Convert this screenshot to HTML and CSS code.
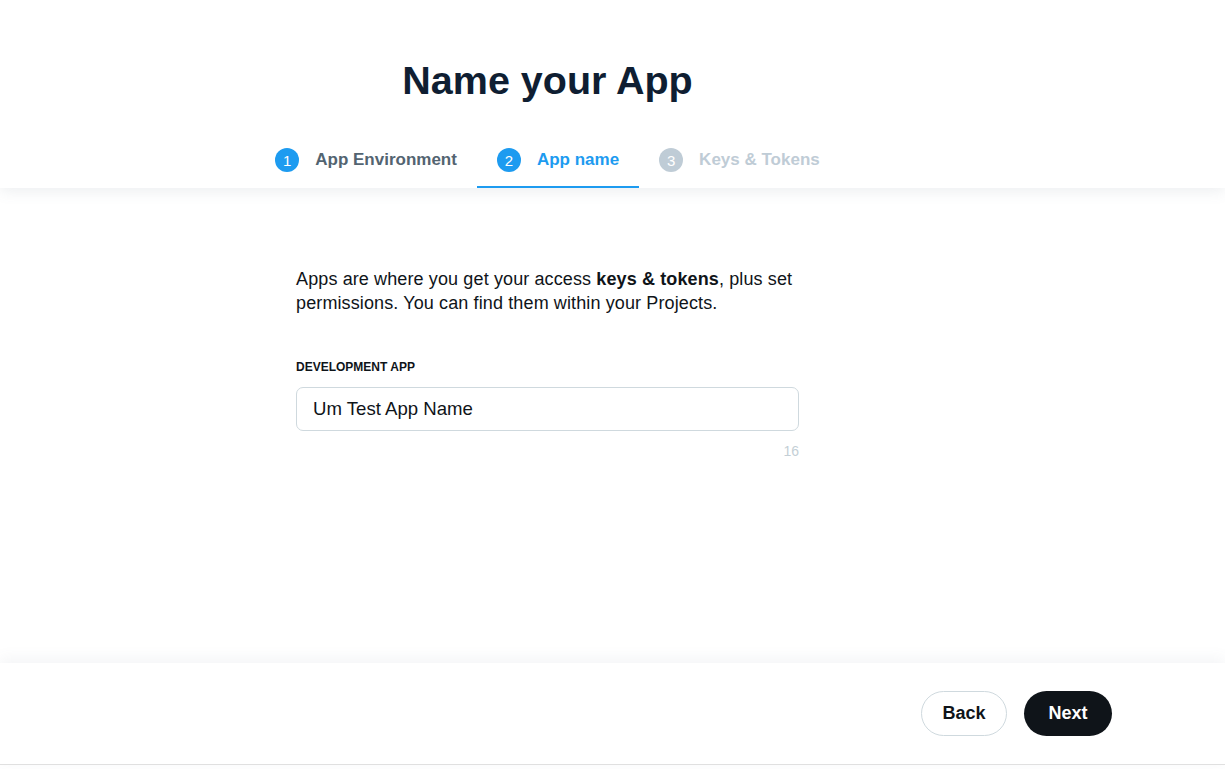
FILE: index.html
```html
<!DOCTYPE html>
<html>
<head>
    <link rel="stylesheet" href="styles.css">
</head>
<body>
    <div id="page">
        <div id="header">
            <div class="column">
                <h1 class="title">Name your App</h1>
                <div class="steps">
                    <div class="step done"><span class="num">1</span>App Environment</div>
                    <div class="step active"><span class="num">2</span>App name</div>
                    <div class="step todo"><span class="num">3</span>Keys &amp; Tokens</div>
                </div>
            </div>
        </div>

        <div id="main">
            <div class="column">
                <div class="form">
                    <p class="intro">Apps are where you get your access <b>keys &amp; tokens</b>, plus set permissions. You can find them within your Projects.</p>
                    <label class="field-label" for="app-name">Development App</label>
                    <div class="input-box">
                        <input id="app-name" type="text" value="Um Test App Name">
                    </div>
                    <div class="counter">16</div>
                </div>
            </div>
        </div>

        <div id="footer">
            <button class="btn back">Back</button>
            <button class="btn next">Next</button>
        </div>
    </div>
</body>
</html>
```

FILE: styles.css
```css
body {
    margin: 0;
    font-family: "Liberation Sans", Arial, sans-serif;
    color: #0f1419;
    background: #fff;
}

#page {
    display: flex;
    flex-direction: column;
    height: 769px;
    overflow: hidden;
}

.column {
    width: 1095px;
    display: flex;
    flex-direction: column;
    align-items: center;
}

#header {
    height: 188px;
    flex-shrink: 0;
    background: #fff;
    position: relative;
    z-index: 1;
    box-shadow: 0 3px 14px rgba(101, 119, 134, 0.12);
}

.title {
    margin: 57px 0 29px;
    font-size: 39.5px;
    line-height: 46px;
    font-weight: bold;
    color: #0f1e32;
}

.steps {
    display: flex;
    height: 56px;
}

.step {
    display: flex;
    align-items: center;
    gap: 16px;
    padding: 0 20px;
    font-size: 17px;
    font-weight: bold;
    box-sizing: border-box;
    border-bottom: 2px solid transparent;
    padding-top: 2px;
}

.num {
    width: 24px;
    height: 24px;
    border-radius: 50%;
    display: flex;
    align-items: center;
    justify-content: center;
    color: #fff;
    font-size: 15px;
    font-weight: normal;
}

.step.done { color: #536471; }
.step.done .num { background: #1d9bf0; }

.step.active {
    color: #1d9bf0;
    border-bottom-color: #1d9bf0;
}
.step.active .num { background: #1d9bf0; }

.step.todo { color: #bfccd6; }
.step.todo .num { background: #bfccd6; }

#main {
    flex: 1;
    background: #fff;
}

.form {
    width: 503px;
    padding-top: 79px;
}

.intro {
    margin: 0 0 44px;
    font-size: 18px;
    line-height: 24px;
    letter-spacing: 0.12px;
}

.field-label {
    display: block;
    font-size: 12px;
    line-height: 16px;
    font-weight: bold;
    text-transform: uppercase;
    margin-bottom: 12px;
}

.input-box {
    height: 44px;
    border: 1px solid #cfd9de;
    border-radius: 7px;
    box-sizing: border-box;
    display: flex;
    align-items: center;
    padding: 0 16px;
}

.input-box input {
    border: none;
    outline: none;
    width: 100%;
    padding: 0;
    font-family: inherit;
    font-size: 18.6px;
    color: #0f1419;
    background: transparent;
}

.counter {
    margin-top: 12px;
    text-align: right;
    font-size: 14px;
    line-height: 16px;
    color: #c4cfd6;
}

#footer {
    flex-shrink: 0;
    height: 101px;
    margin-bottom: 4px;
    border-bottom: 1px solid #e0e0e0;
    display: flex;
    align-items: center;
    justify-content: flex-end;
    gap: 17px;
    padding-right: 113px;
    background: #fff;
    position: relative;
    box-shadow: 0 -4px 14px rgba(101, 119, 134, 0.08);
}

.btn {
    height: 45px;
    border-radius: 23px;
    font-family: inherit;
    font-size: 18px;
    font-weight: bold;
    cursor: pointer;
    box-sizing: border-box;
}

.btn.back {
    width: 86px;
    background: #fff;
    color: #0f1419;
    border: 1px solid #cfd9de;
}

.btn.next {
    width: 88px;
    background: #0f1419;
    color: #fff;
    border: none;
}
```
